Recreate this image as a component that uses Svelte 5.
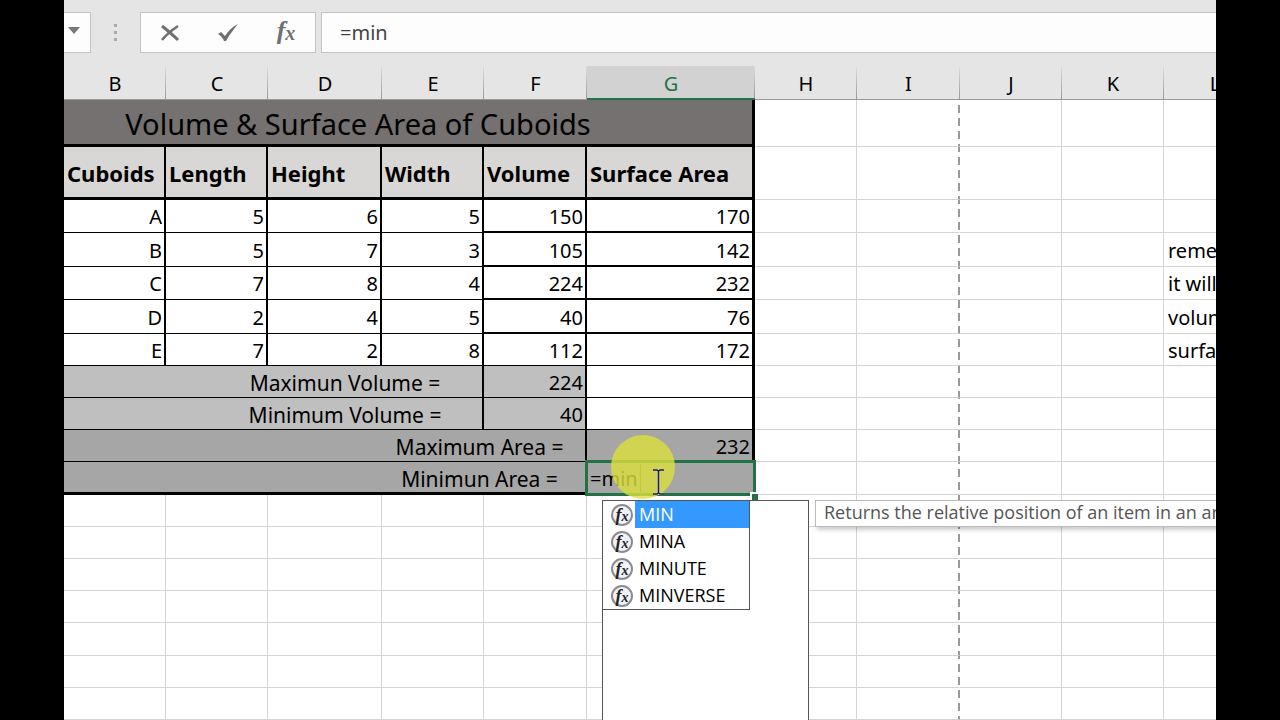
<script lang="ts">
	type Cell = { text?: string; span?: number; kind?: string; editing?: boolean };
	type Row = { height: number; cells: Cell[]; note?: string };

	const columns = ['B', 'C', 'D', 'E', 'F', 'G', 'H', 'I', 'J', 'K', 'L'];
	const widths = [102, 102, 114, 102, 103, 168, 102, 103, 102, 102, 102];
	const outside = ['H', 'I', 'J', 'K'];

	function data(height: number, values: string[], note = '', last = false): Row {
		return {
			height,
			note,
			cells: values.map((text, i) => ({
				text,
				kind: 'value' + (i > 3 && !last ? ' heavy' : '') + (i === 5 ? ' edge' : ''),
			})),
		};
	}

	const rows: Row[] = [
		{
			height: 47,
			cells: [{ text: 'Volume & Surface Area of Cuboids', span: 6, kind: 'title edge' }],
		},
		{
			height: 53,
			cells: ['Cuboids', 'Length', 'Height', 'Width', 'Volume', 'Surface Area'].map((text, i) => ({
				text,
				kind: i === 5 ? 'heading edge' : 'heading',
			})),
		},
		data(33, ['A', '5', '6', '5', '150', '170']),
		data(34, ['B', '5', '7', '3', '105', '142'], 'remember'),
		data(33, ['C', '7', '8', '4', '224', '232'], 'it will'),
		data(34, ['D', '2', '4', '5', '40', '76'], 'volume'),
		data(32, ['E', '7', '2', '8', '112', '172'], 'surface', true),
		{
			height: 32,
			cells: [
				{ text: 'Maximun Volume =', span: 4, kind: 'label light' },
				{ text: '224', kind: 'value light' },
				{ kind: 'value edge' },
			],
		},
		{
			height: 32,
			cells: [
				{ text: 'Minimum Volume =', span: 4, kind: 'label light' },
				{ text: '40', kind: 'value light' },
				{ kind: 'value edge' },
			],
		},
		{
			height: 32,
			cells: [
				{ text: 'Maximum Area =', span: 5, kind: 'label wide dark' },
				{ text: '232', kind: 'value dark edge' },
			],
		},
		{
			height: 33,
			cells: [
				{ text: 'Minimun Area =', span: 5, kind: 'label wide dark bottom' },
				{ kind: 'value dark', editing: true },
			],
		},
	];

	const emptyRows = [32, 32, 32, 32, 33, 32, 32, 32];
	const functions = ['MIN', 'MINA', 'MINUTE', 'MINVERSE'];

	let formula = $state('=min');
	let selected = $state('MIN');
</script>

<div class="screen">
	<main class="excel">
		<div class="formula-bar">
			<button class="name-box" aria-label="Name box">
				<svg width="12" height="7" viewBox="0 0 12 7"><path d="M0 0h12L6 7z" fill="#777" /></svg>
			</button>
			<svg class="grip" width="4" height="18" viewBox="0 0 4 18" fill="#aaa">
				<path d="M0 0h3v3H0zM0 7h3v3H0zM0 14h3v3H0z" />
			</svg>
			<div class="actions">
				<button aria-label="Cancel">
					<svg width="20" height="18" viewBox="0 0 20 18" fill="none" stroke="#707070">
						<path d="M2 2C7 6 12 10 18 16" stroke-width="3" />
						<path d="M18 2C12 6 6 11 2 16" stroke-width="2.6" />
					</svg>
				</button>
				<button aria-label="Enter">
					<svg width="22" height="18" viewBox="0 0 22 18">
						<path d="M1 10l3-2 4 4C11 7 15 3 21 0c-4 5-8 10-12 17H7C6 14 4 12 1 10z" fill="#707070" />
					</svg>
				</button>
				<button class="fx" aria-label="Insert function"><i>f</i><i class="sub">x</i></button>
			</div>
			<input class="formula" aria-label="Formula bar" bind:value={formula} />
		</div>

		<div class="sheet">
			<table>
				<colgroup>
					{#each columns as column, i}
						<col class:page-break={column === 'I'} style:width="{widths[i]}px" />
					{/each}
				</colgroup>
				<thead>
					<tr>
						{#each columns as column}
							<th scope="col" class:active={column === 'G'}>{column}</th>
						{/each}
					</tr>
				</thead>
				<tbody>
					{#each rows as row}
						<tr style:height="{row.height}px">
							{#each row.cells as cell}
								<td class={cell.kind} class:editing={cell.editing} colspan={cell.span ?? 1}>
									{#if cell.editing}
										<input class="cell-input" aria-label="Cell G" bind:value={formula} />
										<div class="frame"></div>
										<div class="handle"></div>
										<div class="list-shell">
											<div class="suggestions" role="listbox">
												{#each functions as name}
													<button
														role="option"
														aria-selected={name === selected}
														onclick={() => (selected = name)}
													>
														<span class="badge"><i>f</i><i class="sub">x</i></span>
														<span class="name">{name}</span>
													</button>
												{/each}
											</div>
										</div>
										<div class="tip" role="tooltip">
											Returns the relative position of an item in an array that matches a specified value
										</div>
										<div class="caret"></div>
										<div class="highlight"></div>
										<svg class="pointer" width="15" height="26" viewBox="0 0 15 26" fill="none">
											<path d="M2 1h4l1.500 1L9 1h4M7.500 2v22M2 25h4l1.500-1L9 25h4" stroke="#ccc" stroke-width="3" />
											<path d="M2 1h4l1.500 1L9 1h4M7.500 2v22M2 25h4l1.500-1L9 25h4" stroke="#223" stroke-width="1.500" />
										</svg>
									{:else}
										{cell.text ?? ''}
									{/if}
								</td>
							{/each}
							{#each outside as column}
								<td class:no-line={column === 'I'}></td>
							{/each}
							<td class="note">{row.note ?? ''}</td>
						</tr>
					{/each}
					{#each emptyRows as height}
						<tr style:height="{height}px">
							{#each columns as column}
								<td class:no-line={column === 'I'}></td>
							{/each}
						</tr>
					{/each}
				</tbody>
			</table>
		</div>
	</main>
</div>

<style>
	:global(body) {
		background: #000;
	}

	.screen {
		box-sizing: border-box;
		height: 100vh;
		padding: 0 5%;
		background: #000;
	}

	.excel {
		display: flex;
		flex-direction: column;
		height: 100%;
		overflow: hidden;
		background: #e5e5e5;
		font-family: 'Noto Sans', 'Liberation Sans', sans-serif;
		font-size: 20px;
		color: #000;
	}

	button,
	input {
		box-sizing: border-box;
		margin: 0;
		padding: 0;
		border: 0;
		border-radius: 0;
		outline: none;
		background: none;
		font: inherit;
		color: inherit;
	}

	.formula-bar {
		display: flex;
		flex: none;
		align-items: center;
		height: 41px;
		padding: 12px 0 13px;
	}

	.name-box {
		display: flex;
		align-items: center;
		width: 27px;
		height: 41px;
		padding: 0 0 4px 4px;
		border: 1px solid #c3c3c3;
		border-left: 0;
		background: #fdfdfd;
	}

	.grip {
		margin: 0 22px 0 23px;
	}

	.actions {
		display: grid;
		grid-template-columns: repeat(3, 58px);
		box-sizing: border-box;
		height: 41px;
		margin-right: 5px;
		border: 1px solid #c3c3c3;
		background: #fdfdfd;
	}

	.actions button {
		display: flex;
		align-items: center;
		justify-content: center;
	}

	.fx,
	.badge {
		font-family: 'Liberation Serif', serif;
		font-weight: bold;
		color: #707070;
	}

	.actions .fx {
		padding-bottom: 4px;
		font-size: 26px;
		line-height: 26px;
	}

	.sub {
		padding-top: 4px;
		font-size: 20px;
	}

	.formula {
		flex: 1;
		height: 41px;
		padding: 0 18px;
		border: 1px solid #c3c3c3;
		border-right: 0;
		background: #fdfdfd;
		color: #444;
	}

	.sheet {
		flex: 1;
		min-height: 0;
		overflow: hidden;
		background: #fff;
	}

	table {
		width: 100%;
		table-layout: fixed;
		border-collapse: separate;
		border-spacing: 0;
	}

	.page-break {
		background: repeating-linear-gradient(#999 0 8px, transparent 8px 13px) right / 2px 100% no-repeat;
	}

	th {
		box-sizing: border-box;
		height: 34px;
		padding: 2px 0 0;
		border-bottom: 1px solid #999;
		background: linear-gradient(#ddd, #999) right / 1px 100% no-repeat #e5e5e5;
		font-size: 20px;
		font-weight: normal;
		line-height: 24px;
	}

	th.active {
		padding-top: 3px;
		border-bottom: 2px solid #217346;
		background-color: #d2d2d2;
		color: #217346;
	}

	td {
		box-sizing: border-box;
		padding: 0;
		border-right: 1px solid #d4d4d4;
		border-bottom: 1px solid #d4d4d4;
		line-height: 24px;
		white-space: nowrap;
	}

	td.no-line {
		border-right-color: transparent;
	}

	td.title,
	td.heading,
	td.value,
	td.label {
		border-right: 2px solid #000;
		border-bottom: 1px solid #000;
	}

	td.title {
		padding: 3px 100px 0 0;
		border-bottom-width: 3px;
		background: #757171;
		font-size: 29px;
		line-height: 40px;
		text-align: center;
	}

	td.heading {
		padding: 2px 0 0 3px;
		border-bottom-width: 3px;
		background: #d9d6d6;
		font-size: 22px;
		font-weight: bold;
	}

	td.value {
		padding: 2px 2px 0 0;
		text-align: right;
	}

	td.heavy {
		padding-top: 3px;
		border-bottom-width: 2px;
	}

	td.edge {
		border-right-width: 3px;
	}

	td.label {
		padding: 2px 0 0 144px;
		font-size: 21px;
		text-align: center;
	}

	td.label.wide {
		padding-left: 310px;
	}

	td.light {
		background: #bfbfbf;
	}

	td.dark {
		background: #a6a6a6;
	}

	td.label.bottom {
		padding-top: 4px;
		border-bottom-width: 3px;
	}

	td.note {
		padding: 2px 0 0 4px;
	}

	td.editing {
		position: relative;
		padding: 0;
		border-right-color: #a6a6a6;
		border-bottom-color: #a6a6a6;
	}

	.cell-input {
		display: block;
		width: 100%;
		height: 30px;
		padding: 1px 0 0 3px;
	}

	.caret {
		position: absolute;
		top: 2px;
		left: 53px;
		width: 1px;
		height: 28px;
		background: #555;
	}

	.frame {
		position: absolute;
		inset: -2px -3px -2px -2px;
		border: 3px solid #217346;
	}

	.handle {
		position: absolute;
		right: -5px;
		bottom: -6px;
		width: 6px;
		height: 6px;
		border-top: 2px solid #fff;
		border-left: 2px solid #fff;
		background: #217346;
	}

	.list-shell {
		position: absolute;
		top: 38px;
		left: 15px;
		box-sizing: border-box;
		width: 207px;
		height: 400px;
		border: 1px solid #555;
		background: #fff;
	}

	.suggestions {
		width: 146px;
		border-right: 1px solid #555;
		border-bottom: 1px solid #555;
		font-family: 'Open Sans', sans-serif;
		font-size: 18px;
		color: #000;
	}

	.suggestions button {
		display: flex;
		align-items: center;
		width: 100%;
		height: 27px;
		padding-left: 8px;
	}

	.badge {
		display: flex;
		align-items: center;
		justify-content: center;
		box-sizing: border-box;
		width: 22px;
		height: 22px;
		margin-right: 2px;
		border: 2px solid #8b8b95;
		border-radius: 50%;
		background: #f2f2f6;
		font-size: 18px;
		line-height: 18px;
		color: #222;
	}

	.badge .sub {
		font-size: 14px;
	}

	.name {
		flex: 1;
		padding-left: 4px;
		line-height: 27px;
		text-align: left;
	}

	[aria-selected='true'] .name {
		background: #3399ff;
		color: #fff;
	}

	.tip {
		position: absolute;
		top: 38px;
		left: 228px;
		padding: 0 8px 3px;
		border: 1px solid #bbb;
		background: #fff;
		box-shadow: 2px 3px 4px rgba(0, 0, 0, 0.2);
		font-family: 'Open Sans', sans-serif;
		font-size: 18px;
		line-height: 22px;
		color: #555;
	}

	.highlight {
		position: absolute;
		top: -27px;
		left: 24px;
		width: 64px;
		height: 64px;
		border-radius: 50%;
		background: rgba(220, 224, 60, 0.8);
	}

	.pointer {
		position: absolute;
		top: 7px;
		left: 64px;
	}
</style>
